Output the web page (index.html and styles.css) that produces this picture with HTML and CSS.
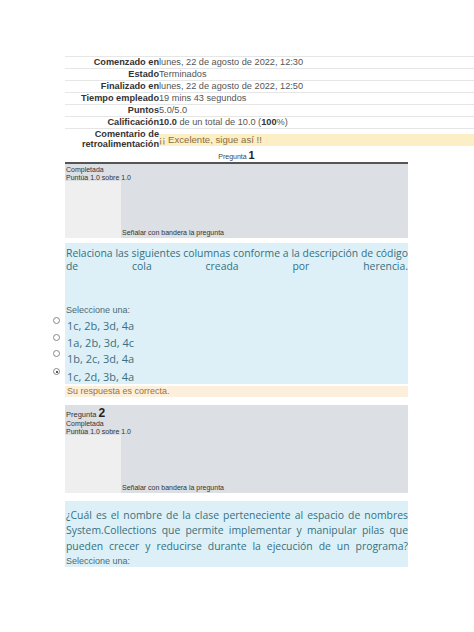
FILE: index.html
```html
<!DOCTYPE html>
<html lang="es">
<head>
<meta charset="utf-8">
<title>Revisión del intento</title>
<link rel="stylesheet" href="styles.css">
</head>
<body>
<div class="page">
  <table class="summary">
    <tr><th>Comenzado en</th><td>lunes, 22 de agosto de 2022, 12:30</td></tr>
    <tr><th>Estado</th><td>Terminados</td></tr>
    <tr><th>Finalizado en</th><td>lunes, 22 de agosto de 2022, 12:50</td></tr>
    <tr><th>Tiempo empleado</th><td>19 mins 43 segundos</td></tr>
    <tr><th>Puntos</th><td>5.0/5.0</td></tr>
    <tr><th>Calificación</th><td><b>10.0</b> de un total de 10.0 (<b>100</b>%)</td></tr>
    <tr class="fb-row"><th>Comentario de<br>retroalimentación</th><td><div class="fb">¡¡ Excelente, sigue así !!</div></td></tr>
  </table>

  <div class="qhead">Pregunta <b>1</b></div>
  <div class="info first">
    <div class="info-text">Completada<br>Puntúa 1.0 sobre 1.0</div>
    <div class="info-row">
      <div class="info-left"></div>
      <div class="info-flag">Señalar con bandera la pregunta</div>
    </div>
  </div>

  <div class="content q1">
    <div class="qtext">
      <div class="line">Relaciona las siguientes columnas conforme a la descripción de código</div>
      <div class="line">de cola creada por herencia.</div>
    </div>
    <div class="prompt">Seleccione una:</div>
    <div class="answers">
      <div class="opt"><span class="radio"></span><span class="otext">1c, 2b, 3d, 4a</span></div>
      <div class="opt"><span class="radio"></span><span class="otext">1a, 2b, 3d, 4c</span></div>
      <div class="opt"><span class="radio"></span><span class="otext">1b, 2c, 3d, 4a</span></div>
      <div class="opt last"><span class="radio checked"></span><span class="otext">1c, 2d, 3b, 4a</span></div>
    </div>
  </div>
  <div class="outcome">Su respuesta es correcta.</div>

  <div class="info second">
    <div class="info-text">
      <div class="qno">Pregunta <b>2</b></div>
      <div>Completada</div>
      <div>Puntúa 1.0 sobre 1.0</div>
    </div>
    <div class="info-row">
      <div class="info-left"></div>
      <div class="info-flag">Señalar con bandera la pregunta</div>
    </div>
  </div>

  <div class="content q2">
    <div class="qtext">
      <div class="line">¿Cuál es el nombre de la clase perteneciente al espacio de nombres</div>
      <div class="line">System.Collections que permite implementar y manipular pilas que</div>
      <div class="line">pueden crecer y reducirse durante la ejecución de un programa?</div>
    </div>
    <div class="prompt">Seleccione una:</div>
  </div>
</div>
</body>
</html>
```

FILE: styles.css
```css
html, body {
  margin: 0;
  padding: 0;
  background: #ffffff;
}
body {
  font-family: "Liberation Sans", Arial, sans-serif;
  color: #333;
  width: 474px;
  height: 632px;
  overflow: hidden;
}
.page {
  padding-top: 56px;
  margin-left: 65px;
}
.summary {
  border-collapse: collapse;
  width: 409px;
  font-size: 9.2px;
}
.summary th, .summary td {
  border-top: 1px solid #e6e6e6;
  padding: 0;
  height: 11px;
  line-height: 11px;
  vertical-align: middle;
}
.summary th {
  text-align: right;
  width: 94px;
  font-weight: bold;
  color: #333;
  white-space: nowrap;
}
.summary td {
  text-align: left;
  color: #555;
}
.summary td b { color: #333; }
.summary .fb-row th {
  line-height: 10px;
  padding: 0;
}
.fb {
  background: #fcefc6;
  color: #8a6d3b;
  font-size: 9.6px;
  line-height: 12px;
  margin-top: 2px;
}
.qhead {
  width: 343px;
  text-align: center;
  font-size: 7px;
  color: #444;
  margin-top: 1px;
  line-height: 10px;
}
.qhead b {
  font-size: 11px;
  color: #222;
}
.info {
  width: 343px;
  background: #dcdfe3;
  font-size: 7px;
  color: #333;
}
.info.first {
  border-top: 2px solid #555;
}
.info-text {
  line-height: 7.5px;
  padding: 2px 0 0 1px;
}
.info.first .info-text { height: 15px; }
.info-row {
  display: flex;
  height: 57px;
}
.info.second .info-row { height: 58px; }
.info-left {
  width: 56px;
  background: #efefef;
}
.info-flag {
  flex: 1;
  display: flex;
  align-items: flex-end;
  padding: 0 0 1px 1px;
  line-height: 8px;
}
.info.second {
  margin-top: 8px;
}
.info.second .info-text {
  line-height: 8px;
  padding-top: 3px;
  height: 30px;
  box-sizing: border-box;
}
.qno {
  font-size: 7.5px;
  line-height: 11px;
}
.qno b {
  font-size: 12px;
  color: #222;
}
.content {
  width: 343px;
  background: #ddf0f8;
  margin-top: 5px;
}
.content.q2 { margin-top: 8px; }
.qtext {
  font-family: "Open Sans", "DejaVu Sans", sans-serif;
  color: #367080;
  font-size: 10.4px;
  line-height: 13px;
  padding: 4px 0 0 1px;
}
.line {
  text-align: justify;
  text-align-last: justify;
}
.prompt {
  font-size: 9px;
  color: #4b6b74;
  line-height: 12px;
  padding-left: 1px;
}
.q1 .prompt { margin-top: 31px; }
.q2 .qtext { padding-top: 6.5px; line-height: 15.5px; }
.q2 .prompt { margin-top: 1px; }
.answers {
  margin-top: 2px;
}
.opt {
  position: relative;
  height: 16.5px;
}
.otext {
  display: block;
  font-family: "Open Sans", "DejaVu Sans", sans-serif;
  font-size: 11px;
  color: #3d6f7d;
  line-height: 16.5px;
  padding-left: 2px;
}
.opt.last .otext { padding-top: 2px; line-height: 14.5px; }
.radio {
  position: absolute;
  left: -12px;
  top: -1px;
  width: 5px;
  height: 5px;
  border: 1px solid #888;
  border-radius: 50%;
  background: #fff;
}
.opt.last .radio { top: 0.5px; }
.radio.checked::after {
  content: "";
  position: absolute;
  left: 1.5px;
  top: 1.5px;
  width: 2px;
  height: 2px;
  border-radius: 50%;
  background: #222;
}
.outcome {
  width: 341px;
  margin-top: 2px;
  background: #fcefdc;
  color: #9c7335;
  font-size: 9px;
  line-height: 11px;
  padding-left: 2px;
}
```
